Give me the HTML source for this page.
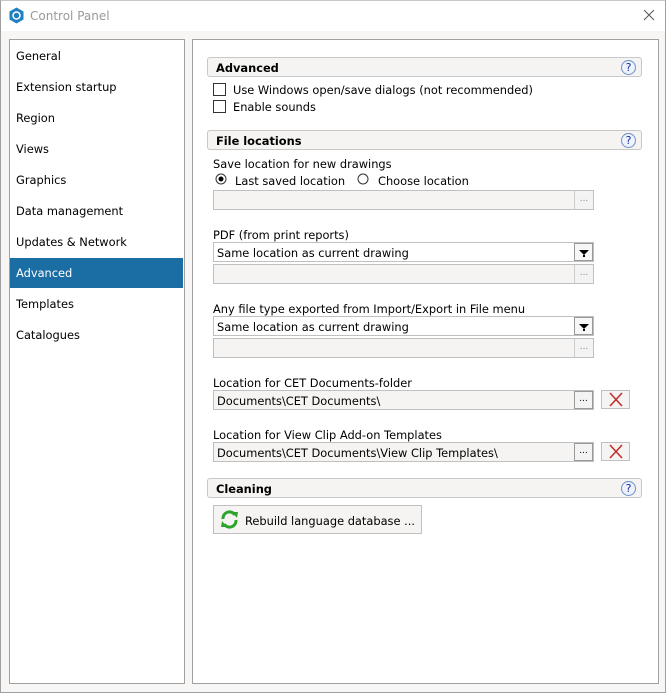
<!DOCTYPE html>
<html><head><meta charset="utf-8"><style>
*{margin:0;padding:0;box-sizing:border-box}
body{width:666px;height:693px;overflow:hidden;background:#f7f6f4;font-family:"DejaVu Sans","Liberation Sans",sans-serif;font-size:11.4px;color:#000;position:relative}
.a{position:absolute;white-space:nowrap}
.t{margin-top:1px}
.win{position:absolute;left:0;top:0;width:666px;height:693px;border:1px solid #a0a0a0;border-top:1px solid #c8c8c8}
.title{position:absolute;left:1px;top:1px;width:664px;height:30px;background:#fff}
.panel{position:absolute;background:#fff;border:1px solid #a0a0a0}
.item{position:absolute;left:10px;width:173px;height:31px;line-height:33px;padding-left:6px}
.sel{background:#1b6ea3;color:#fff}
.hdr{position:absolute;left:207px;width:435px;height:20px;background:#f5f4f2;border:1px solid #c8c8c8;border-radius:3px;font-weight:bold;line-height:20px;padding-left:8px}
.help{position:absolute;right:5px;top:2px;width:15px;height:15px;border-radius:50%;border:1px solid #6a8fc8;background:#eef3fb;color:#1030a0;font-size:11px;line-height:13px;text-align:center;font-weight:normal}
.cb{position:absolute;width:13px;height:13px;border:1px solid #333;background:#fff}
.fld{position:absolute;left:213px;width:381px;height:20px;border:1px solid #c0c0c0;background:#f5f4f2;line-height:20px;padding-left:3px}
.fld.w{background:#fff}
.btn{position:absolute;right:0;top:0;width:19px;height:18px;border-left:1px solid #ccc;background:#f3f3f3;font-size:9px;color:#888;text-align:center;line-height:16px}
.btn.on{border:1px solid #999;color:#000;line-height:14px}
.x{position:absolute;left:601px;width:29px;height:19px;border:1px solid #c0c0c0;background:#f5f4f2}
</style></head><body>
<div class="title"></div>
<svg class="a" style="left:9px;top:7px" width="15" height="17" viewBox="0 0 15 17"><path d="M7.5 0.5 L14.5 4.5 L14.5 12.5 L7.5 16.5 L0.5 12.5 L0.5 4.5Z" fill="#1f7fc0"/><circle cx="7.5" cy="8.5" r="3.5" fill="none" stroke="#fff" stroke-width="1.5"/></svg>
<div class="a" style="left:30px;top:9px;font-size:12px;color:#999">Control Panel</div>
<svg class="a" style="left:643px;top:9px" width="12" height="12"><path d="M1 1L11 11M11 1L1 11" stroke="#555" stroke-width="1"/></svg>
<div class="win"></div>

<div class="panel" style="left:9px;top:39px;width:176px;height:645px"></div>
<div class="item" style="top:40px">General</div>
<div class="item" style="top:71px">Extension startup</div>
<div class="item" style="top:102px">Region</div>
<div class="item" style="top:133px">Views</div>
<div class="item" style="top:164px">Graphics</div>
<div class="item" style="top:195px">Data management</div>
<div class="item" style="top:226px">Updates &amp; Network</div>
<div class="item sel" style="top:258px;height:30px;line-height:31px">Advanced</div>
<div class="item" style="top:288px">Templates</div>
<div class="item" style="top:319px">Catalogues</div>

<div class="panel" style="left:192px;top:39px;width:467px;height:645px"></div>

<div class="hdr" style="top:57px">Advanced<div class="help">?</div></div>
<div class="cb" style="left:213px;top:83px"></div>
<div class="a" style="left:233px;top:83px">Use Windows open/save dialogs (not recommended)</div>
<div class="cb" style="left:213px;top:100px"></div>
<div class="a" style="left:233px;top:100px">Enable sounds</div>

<div class="hdr" style="top:130px">File locations<div class="help">?</div></div>
<div class="a" style="left:213px;top:157px">Save location for new drawings</div>
<svg class="a" style="left:215px;top:173px" width="12" height="12"><circle cx="6" cy="6" r="5" fill="#fff" stroke="#333"/><circle cx="6" cy="6" r="2.5" fill="#000"/></svg>
<div class="a" style="left:235px;top:174px">Last saved location</div>
<svg class="a" style="left:357px;top:173px" width="12" height="12"><circle cx="6" cy="6" r="5" fill="#fff" stroke="#333"/></svg>
<div class="a" style="left:378px;top:174px">Choose location</div>
<div class="fld" style="top:190px"><div class="btn">...</div></div>

<div class="a" style="left:213px;top:228px">PDF (from print reports)</div>
<div class="fld w" style="top:242px">Same location as current drawing<div class="btn on" style="background:#f7f7f7"><svg width="12" height="12" style="margin-top:3px"><path d="M1 3H11L6 8Z M5 8H7V10H5Z" fill="#000"/></svg></div></div>
<div class="fld" style="top:264px"><div class="btn">...</div></div>

<div class="a" style="left:213px;top:302px">Any file type exported from Import/Export in File menu</div>
<div class="fld w" style="top:316px">Same location as current drawing<div class="btn on" style="background:#f7f7f7"><svg width="12" height="12" style="margin-top:3px"><path d="M1 3H11L6 8Z M5 8H7V10H5Z" fill="#000"/></svg></div></div>
<div class="fld" style="top:338px"><div class="btn">...</div></div>

<div class="a" style="left:213px;top:376px">Location for CET Documents-folder</div>
<div class="fld" style="top:390px">Documents\CET Documents\<div class="btn on">...</div></div>
<div class="x" style="top:390px"><svg width="27" height="17"><path d="M8 2L20 15M20 2L8 15" stroke="#c03030" stroke-width="1.6"/></svg></div>

<div class="a" style="left:213px;top:428px">Location for View Clip Add-on Templates</div>
<div class="fld" style="top:442px">Documents\CET Documents\View Clip Templates\<div class="btn on">...</div></div>
<div class="x" style="top:442px"><svg width="27" height="17"><path d="M8 2L20 15M20 2L8 15" stroke="#c03030" stroke-width="1.6"/></svg></div>

<div class="hdr" style="top:478px">Cleaning<div class="help">?</div></div>
<div class="a" style="left:213px;top:505px;width:209px;height:29px;border:1px solid #c0c0c0;background:#f5f4f2"></div>
<svg class="a" style="left:220px;top:510px" width="19" height="19" viewBox="0 0 19 19"><path d="M3 9A6.5 6.5 0 0 1 15 5" fill="none" stroke="#2aa52a" stroke-width="3"/><path d="M16 10A6.5 6.5 0 0 1 4 14" fill="none" stroke="#2aa52a" stroke-width="3"/><path d="M12 2L18 2L17 8Z M7 17L1 17L2 11Z" fill="#2aa52a"/></svg>
<div class="a" style="left:245px;top:514px">Rebuild language database ...</div>
</body></html>
